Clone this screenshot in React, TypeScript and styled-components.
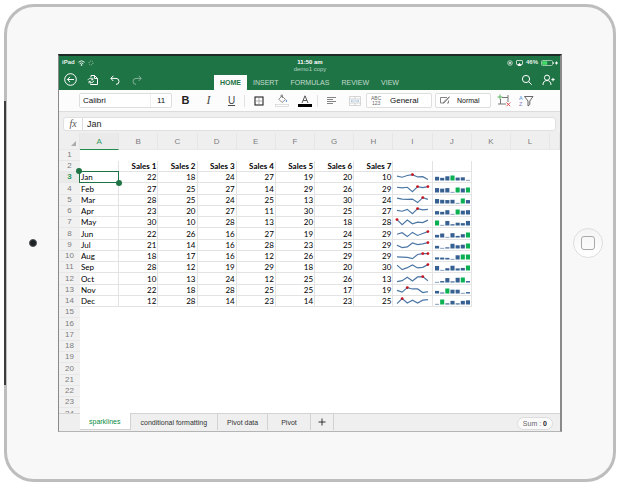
import React from "react";
import styled, { createGlobalStyle, css } from "styled-components";

const GREEN = "#1f7446";

const Global = createGlobalStyle`
  * { box-sizing: border-box; }
  body { margin: 0; background: #fff; font-family: "Liberation Sans", Arial, sans-serif; }
  button, input, select { font: inherit; color: inherit; margin: 0; padding: 0; border: 0; background: none; appearance: none; outline: none; }
  svg { display: block; flex: none; }
`;

const Tablet = styled.main`
  position: relative;
  display: grid;
  grid-template-columns: 51px minmax(0, 1fr) 51px;
  align-items: center;
  justify-items: center;
  margin: 4px;
  padding: 47px 0;
  border: 3px solid #bdbdbd;
  border-radius: 30px;
  background: #f8f8f8;
`;
const EdgeShadow = styled.div`
  position: absolute;
  left: -3px;
  top: 20%;
  bottom: 20%;
  width: 2px;
  background: #3c3c3c;
`;
const Camera = styled.div`
  width: 8px;
  height: 8px;
  border-radius: 50%;
  border: 1px solid #555;
  background: #1c2226;
`;
const HomeButton = styled.button`
  display: grid;
  place-items: center;
  width: 30px;
  height: 30px;
  border: 1px solid #dedede;
  border-radius: 50%;
  background: linear-gradient(#f4f4f4, #fff);
  &::after {
    content: "";
    width: 12px;
    height: 12px;
    border: 1px solid #a9a9a9;
    border-radius: 3px;
  }
`;
const Screen = styled.div`
  width: 100%;
  border: solid #8a8a8a;
  border-width: 2px 2px 1px 1px;
  border-top-color: #1d2a25;
  border-bottom-color: #b5b5b5;
  background: #fff;
`;

const Header = styled.header`
  background: ${GREEN};
  color: #fff;
`;
const StatusBar = styled.div`
  display: grid;
  grid-template-columns: 1fr auto 1fr;
  height: 17px;
  padding: 3px 2px 0 3px;
  font-size: 7px;
  line-height: 7px;
  color: #e6f0ea;
`;
const StatusGroup = styled.div<{ $end?: boolean }>`
  display: flex;
  align-items: center;
  justify-content: ${(p) => (p.$end ? "flex-end" : "flex-start")};
  gap: 3px;
  height: 7px;
  font-size: 6px;
  font-weight: 700;
`;
const Title = styled.div`
  text-align: center;
  font-size: 6px;
  strong { display: block; color: #fff; }
  span { color: #b5d2c1; }
`;
const Ribbon = styled.div`
  display: flex;
  justify-content: space-between;
  height: 17px;
  padding: 0 5px;
`;
const IconRow = styled.div<{ $gap: number }>`
  display: flex;
  align-items: center;
  gap: ${(p) => p.$gap}px;
  height: 13px;
`;
const HeaderSide = styled.div`
  display: flex;
`;
const IconButton = styled.button<{ $dim?: boolean }>`
  display: grid;
  place-items: center;
  opacity: ${(p) => (p.$dim ? 0.45 : 1)};
`;
const Tabs = styled.nav`
  display: flex;
  align-items: flex-end;
  margin-left: 71px;
`;
const RibbonTab = styled.button<{ $active?: boolean }>`
  height: 15px;
  padding: 0 6px;
  font-size: 7px;
  line-height: 15px;
  color: #c3dccd;
  ${(p) => p.$active && css`
    background: #fcfcfc;
    color: ${GREEN};
    font-weight: 700;
  `}
`;

const Toolbar = styled.div`
  display: flex;
  align-items: center;
  height: 22px;
  padding-left: 20px;
  border-bottom: 1px solid #dcdcdc;
  background: #fcfcfc;
  color: #333;
  font-size: 8px;
`;
const Box = styled.div<{ $width: number; $gap: number }>`
  display: flex;
  align-items: center;
  flex: none;
  width: ${(p) => p.$width}px;
  height: 15px;
  margin-right: ${(p) => p.$gap}px;
  border: 1px solid #dedede;
  border-radius: 2px;
  background: #fff;
  svg { margin-left: 4px; }
`;
const Picker = styled.select`
  flex: 1;
  min-width: 0;
  height: 13px;
  padding-left: 3px;
  font-size: 8px;
  line-height: 13px;
  color: #111;
`;
const NumberPicker = styled(Picker)`
  padding-left: 8px;
`;
const StylePicker = styled(Picker)`
  padding-left: 7px;
  font-size: 7px;
`;
const SizePicker = styled(Picker)`
  flex: none;
  width: 21px;
  padding-left: 6px;
  border-left: 1px solid #eee;
`;
const Tool = styled.button<{ $look?: "bold" | "italic" | "underline" }>`
  display: grid;
  place-items: center;
  flex: none;
  width: 23px;
  height: 15px;
  color: #4a4a4a;
  font-size: 10px;
  line-height: 15px;
  ${(p) => p.$look === "bold" && css`font-weight: 700; color: #222; font-size: 11px;`}
  ${(p) => p.$look === "italic" && css`font-family: "Liberation Serif", serif; font-style: italic; font-size: 12px;`}
  ${(p) => p.$look === "underline" && css`text-decoration: underline; font-size: 10px;`}
`;
const Rule = styled.span`
  flex: none;
  width: 1px;
  height: 12px;
  margin: 0 2px 0 1px;
  background: #e2e2e2;
`;

const FormulaArea = styled.div`
  padding: 5px 4px 2px;
  background: #efefef;
`;
const FormulaBar = styled.label`
  display: flex;
  align-items: center;
  height: 14px;
  border: 1px solid #e0e0e0;
  border-radius: 3px;
  background: #fff;
  span {
    width: 19px;
    text-align: center;
    font: italic 10px/12px "Liberation Serif", serif;
    color: #555;
    border-right: 1px solid #ddd;
  }
  input { flex: 1; min-width: 0; height: 12px; padding-left: 4px; font-size: 9px; color: #222; }
`;

const SheetView = styled.div`
  height: 280px;
  overflow: hidden;
`;
const Sheet = styled.table`
  width: 100%;
  table-layout: fixed;
  border-collapse: separate;
  border-spacing: 0;
  font: 8px/10px Lato, sans-serif;
  color: #000;
  td, th { padding: 0; }
`;
const GutterCol = styled.col`width: 21px;`;
const DataCol = styled.col`width: 7.82%;`;
const ColumnHead = styled.th<{ $active?: boolean }>`
  height: 17px;
  font: 8px/15px "Liberation Sans", Arial, sans-serif;
  color: ${(p) => (p.$active ? "#2c9a5c" : "#7d7d7d")};
  background: ${(p) => (p.$active ? "#eaeaea" : "#efefef")};
  border-right: 1px solid #e6e6e6;
  border-bottom: ${(p) => (p.$active ? "1px solid #1f8a4c" : "1px solid #e9e9e9")};
  svg { margin: 4px 0 0 12px; }
`;
const Row = styled.tr`
  height: 11px;
  &:nth-child(4n) { height: 12px; }
`;
const RowHead = styled.th<{ $active?: boolean }>`
  font: 8px/10px "Liberation Sans", Arial, sans-serif;
  font-weight: ${(p) => (p.$active ? 700 : 400)};
  color: ${(p) => (p.$active ? "#2c9a5c" : "#7d7d7d")};
  background: ${(p) => (p.$active ? "#eaeaea" : "#f1f1f1")};
  border-bottom: 1px solid #e8e8e8;
`;
const Cell = styled.td<{ $lined?: boolean; $num?: boolean; $bold?: boolean }>`
  position: relative;
  white-space: nowrap;
  text-align: ${(p) => (p.$num ? "right" : "left")};
  font-weight: ${(p) => (p.$bold ? 700 : 400)};
  ${(p) => p.$lined && css`
    border-right: 1px solid #e3e3e3;
    border-bottom: 1px solid #e3e3e3;
  `}
  && { padding: 0 1px; }
  svg { margin: 0 1px; }
`;
const Selection = styled.div`
  position: absolute;
  inset: -1px;
  z-index: 1;
  border: 1px solid ${GREEN};
  &::before, &::after {
    content: "";
    position: absolute;
    width: 6px;
    height: 6px;
    border-radius: 50%;
    background: ${GREEN};
  }
  &::before { left: -4px; top: -4px; }
  &::after { right: -4px; bottom: -4px; }
`;

const Footer = styled.footer`
  display: flex;
  align-items: flex-start;
  height: 18px;
  padding-left: 21px;
  background: #efefef;
  border-top: 1px solid #d4d4d4;
`;
const SheetTab = styled.button<{ $active?: boolean; $pad?: number }>`
  height: 16px;
  padding: 0 ${(p) => p.$pad ?? 9}px;
  border-right: 1px solid #d2d2d2;
  font-size: 7px;
  line-height: 15px;
  white-space: nowrap;
  color: #333;
  ${(p) => p.$active && css`
    margin-top: -1px;
    height: 17px;
    background: #fff;
    color: #078a41;
    border-bottom: 1px solid #d2d2d2;
  `}
`;
const Sum = styled.output`
  margin: 3px 7px 0 auto;
  padding: 0 5px;
  border: 1px solid #dcdcdc;
  border-radius: 7px;
  background: #fafafa;
  font-size: 7px;
  line-height: 11px;
  color: #666;
  b { color: #222; }
`;

const data: [string, number[]][] = [
  ["Jan", [22, 18, 24, 27, 19, 20, 10]],
  ["Feb", [27, 25, 27, 14, 29, 26, 29]],
  ["Mar", [28, 25, 24, 25, 13, 30, 24]],
  ["Apr", [23, 20, 27, 11, 30, 25, 27]],
  ["May", [30, 10, 28, 13, 20, 18, 28]],
  ["Jun", [22, 26, 16, 27, 19, 24, 29]],
  ["Jul", [21, 14, 16, 28, 23, 25, 29]],
  ["Aug", [18, 17, 16, 12, 26, 29, 29]],
  ["Sep", [28, 12, 19, 29, 18, 20, 30]],
  ["Oct", [10, 13, 24, 12, 25, 26, 13]],
  ["Nov", [22, 18, 28, 25, 25, 17, 19]],
  ["Dec", [12, 28, 14, 23, 14, 23, 25]],
];
const columns = "ABCDEFGHIJKL".split("");

function scale(values: number[]) {
  const min = Math.min(...values);
  const max = Math.max(...values);
  return values.map((v) => (v - min) / (max - min));
}

function LineSpark({ values }: { values: number[] }) {
  const pts = scale(values).map((s, i) => ({ x: 2 + i * 5.15, y: 7.6 - s * 5, top: s === 1 }));
  return (
    <svg width="35" height="10" viewBox="0 0 35 10" aria-label="Trend line">
      <polyline points={pts.map((p) => `${p.x},${p.y}`).join(" ")} fill="none" stroke="#4c77a5" strokeWidth="1.2" />
      {pts.filter((p) => p.top).map((p) => <circle key={p.x} cx={p.x} cy={p.y} r="1.4" fill="#c8141e" />)}
    </svg>
  );
}

function BarSpark({ values }: { values: number[] }) {
  return (
    <svg width="36" height="10" viewBox="0 0 36 10" aria-label="Trend columns">
      {scale(values).map((s, i) => {
        const h = 0.6 + s * 4.4;
        return <rect key={i} x={i * 5.15} y={8.5 - h} width="4.1" height={h} fill={s === 1 ? "#0bb052" : "#376092"} />;
      })}
    </svg>
  );
}

const line = { fill: "none", stroke: "currentColor", strokeWidth: 1 } as const;

function SheetRow({ n }: { n: number }) {
  const entry = data[n - 3];
  let cells: React.ReactNode;
  if (n === 2) {
    cells = columns.slice(0, 10).map((c, i) => (
      <Cell key={c} $lined $num $bold>{i > 0 && i < 8 ? `Sales ${i}` : null}</Cell>
    ));
  } else if (entry) {
    const [month, values] = entry;
    cells = (
      <>
        <Cell $lined>{month}{n === 3 && <Selection />}</Cell>
        {values.map((v, i) => <Cell key={i} $lined $num>{v}</Cell>)}
        <Cell $lined><LineSpark values={values} /></Cell>
        <Cell $lined><BarSpark values={values} /></Cell>
      </>
    );
  } else {
    cells = <Cell colSpan={10} />;
  }
  return (
    <Row>
      <RowHead scope="row" $active={n === 3}>{n}</RowHead>
      {cells}
      <Cell colSpan={3} />
    </Row>
  );
}

export default function App() {
  return (
    <>
      <Global />
      <Tablet>
        <EdgeShadow />
        <Camera />
        <Screen>
          <Header>
            <StatusBar>
              <StatusGroup>
                iPad
                <svg width="7" height="6" viewBox="0 0 7 6" fill="none" stroke="#e6f0ea" strokeWidth="1">
                  <path d="M.4 2.2Q3.5-.7 6.6 2.2M1.7 3.7Q3.5 2 5.3 3.7" />
                  <circle cx="3.5" cy="5" r=".5" fill="#e6f0ea" />
                </svg>
                <svg width="6" height="6" viewBox="0 0 6 6" fill="none" stroke="#9cc4ac" strokeDasharray="1 .9" strokeWidth="1">
                  <circle cx="3" cy="3" r="2" />
                </svg>
              </StatusGroup>
              <Title><strong>11:50 am</strong><span>demo1 copy</span></Title>
              <StatusGroup $end>
                <svg width="6" height="6" viewBox="0 0 6 6" fill="none" stroke="#e6f0ea" strokeWidth=".7">
                  <circle cx="3" cy="3" r="2.3" /><path d="M1.8 3h2.4M3 1.8v2.4" strokeWidth="1" />
                </svg>
                <svg width="7" height="6" viewBox="0 0 7 6">
                  <rect x=".5" y=".5" width="6" height="4" rx=".5" fill="none" stroke="#e6f0ea" strokeWidth=".8" />
                  <path d="M1.5 6 3.5 2.8 5.5 6Z" fill="#fff" />
                </svg>
                46%
                <svg width="17" height="6" viewBox="0 0 17 6">
                  <rect x=".5" y=".5" width="11" height="5" rx="1" fill="none" stroke="#b9d7c5" strokeWidth=".8" />
                  <rect x="1.2" y="1.2" width="5" height="3.6" fill="#42dc66" />
                  <path d="M12.5 2v2" stroke="#b9d7c5" />
                  <path d="M14 3h3M15.5 1.5v3" stroke="#fff" />
                </svg>
              </StatusGroup>
            </StatusBar>
            <Ribbon>
              <HeaderSide>
                <IconRow $gap={10}>
                  <IconButton aria-label="Back">
                    <svg width="13" height="13" viewBox="0 0 13 13" {...line}>
                      <circle cx="6.5" cy="6.5" r="5.8" /><path d="M10 6.5H3.5M6 3.9 3.4 6.5 6 9.1" />
                    </svg>
                  </IconButton>
                  <IconButton aria-label="File">
                    <svg width="12" height="12" viewBox="0 0 12 12" {...line}>
                      <path d="M4 3.5V1.500H7.500L10.500 4.500V10.500H3.500V9.500M7.500 1.500V4.500H10.500" />
                      <path d="M1 6.200C1.500 4 4.500 3.800 5.600 5.600M5.800 3.800V5.800H4M6.800 6.800C6.300 9 3.300 9.200 2.200 7.600M2 9.300V7.400H3.800" strokeWidth=".9" />
                    </svg>
                  </IconButton>
                  <IconButton aria-label="Undo">
                    <svg width="12" height="12" viewBox="0 0 12 12" {...line}>
                      <path d="M4.3 1.8 1.8 4.4 4.3 7M2 4.4h5a3 3 0 0 1 0 6" />
                    </svg>
                  </IconButton>
                  <IconButton aria-label="Redo" $dim>
                    <svg width="12" height="12" viewBox="0 0 12 12" {...line}>
                      <path d="M7.7 1.8l2.5 2.6L7.7 7M10 4.4H5a3 3 0 0 0 0 6" />
                    </svg>
                  </IconButton>
                </IconRow>
                <Tabs aria-label="Ribbon">
                  <RibbonTab $active>HOME</RibbonTab>
                  <RibbonTab>INSERT</RibbonTab>
                  <RibbonTab>FORMULAS</RibbonTab>
                  <RibbonTab>REVIEW</RibbonTab>
                  <RibbonTab>VIEW</RibbonTab>
                </Tabs>
              </HeaderSide>
              <IconRow $gap={9}>
                <IconButton aria-label="Search">
                  <svg width="12" height="12" viewBox="0 0 12 12" {...line}>
                    <circle cx="5" cy="5" r="3.6" /><path d="m7.7 7.7 3 3" />
                  </svg>
                </IconButton>
                <IconButton aria-label="Share">
                  <svg width="13" height="12" viewBox="0 0 13 12" {...line}>
                    <circle cx="5" cy="3.7" r="2.6" /><path d="M1 11c0-3 1.6-4.5 4-4.5S9 8 9 11M9.3 5.6h3.4M11 3.9v3.4" />
                  </svg>
                </IconButton>
              </IconRow>
            </Ribbon>
          </Header>

          <Toolbar>
            <Box $width={93} $gap={2}>
              <Picker aria-label="Font"><option>Calibri</option></Picker>
              <SizePicker aria-label="Font size"><option>11</option></SizePicker>
            </Box>
            <Tool $look="bold">B</Tool>
            <Tool $look="italic">I</Tool>
            <Tool $look="underline">U</Tool>
            <Rule />
            <Tool aria-label="Borders">
              <svg width="10" height="10" viewBox="0 0 10 10">
                <rect x="1" y="1" width="8" height="8" fill="none" stroke="#222" strokeWidth="1.1" />
                <path d="M5 2v6M2 5h6" stroke="#999" strokeWidth=".7" />
              </svg>
            </Tool>
            <Tool aria-label="Fill colour">
              <svg width="14" height="13" viewBox="0 0 14 13" fill="none">
                <path d="m7 2 3.5 3.5L7 8.5 3.8 5.2ZM6 3.3V1h1.5v3" stroke="#777" strokeWidth=".8" />
                <path d="M11.3 5.5c1 1.3 1 2.5.2 2.5s-1-1-.2-2.5Z" fill="#4a90d9" />
                <rect x=".5" y="10.5" width="13" height="2" stroke="#ccc" strokeWidth=".6" />
              </svg>
            </Tool>
            <Tool aria-label="Font colour">
              <svg width="14" height="13" viewBox="0 0 14 13">
                <path d="M4 9 7 1.8 10 9M5.1 6.5h3.8" fill="none" stroke="#444" strokeWidth=".9" />
                <rect y="10" width="14" height="3" fill="#000" />
              </svg>
            </Tool>
            <Rule />
            <Tool aria-label="Alignment">
              <svg width="10" height="9" viewBox="0 0 10 9" stroke="#777" strokeWidth=".9">
                <path d="M0 1.500h9M0 3.500h6M0 5.500h9M0 7.500h6" />
              </svg>
            </Tool>
            <Tool aria-label="Merge cells">
              <svg width="12" height="10" viewBox="0 0 12 10" fill="none" stroke="#ccc" strokeWidth=".8">
                <path d="M.5.5h11v9H.5ZM.5 3h11M.5 7h11M6 .5V3M6 7v2.5" />
                <path d="M2 5h8M3.3 4 2 5l1.3 1M8.700 4 10 5 8.700 6" stroke="#9fc0df" />
              </svg>
            </Tool>
            <Box $width={66} $gap={3}>
              <svg width="11" height="11" viewBox="0 0 11 11" fontFamily="Liberation Sans" fontSize="5" fill="#666">
                <text x="0" y="5">ABC</text><text x="1" y="10">123</text>
              </svg>
              <NumberPicker aria-label="Number format"><option>General</option></NumberPicker>
            </Box>
            <Box $width={56} $gap={1}>
              <svg width="10" height="9" viewBox="0 0 10 9" fill="none" stroke="#666" strokeWidth=".8">
                <path d="M7 1.500H.5v5.500H4M7 7h1.500V4.500M9.500.8 5 6l-1.300 1 .5-1.700Z" />
              </svg>
              <StylePicker aria-label="Cell style"><option>Normal</option></StylePicker>
            </Box>
            <Tool aria-label="Insert and delete cells">
              <svg width="14" height="13" viewBox="0 0 14 13" fill="none" stroke="#666" strokeWidth=".9">
                <path d="M3.500 5v5H9M5 3.500h6V8M1 10h2.500M11 1v2.500" />
                <path d="M.5 3h5M3 .5v5" stroke="#4caf50" />
                <path d="m9.500 8.500 3.700 3.700m0-3.700-3.700 3.700" stroke="#e0403f" />
              </svg>
            </Tool>
            <Tool aria-label="Sort and filter">
              <svg width="15" height="12" viewBox="0 0 15 12" fontFamily="Liberation Sans" fontSize="5.500">
                <text x="0" y="5" fill="#4a90d9">A</text><text x="0" y="11" fill="#8a7fc0">Z</text>
                <path d="M5.500 1.500h8.500L10.800 6v3.500L9 11V6Z" fill="none" stroke="#555" strokeWidth=".9" />
              </svg>
            </Tool>
          </Toolbar>

          <FormulaArea>
            <FormulaBar><span>fx</span><input aria-label="Formula" defaultValue="Jan" /></FormulaBar>
          </FormulaArea>

          <SheetView>
            <Sheet>
              <colgroup>
                <GutterCol />
                {columns.map((c) => <DataCol key={c} />)}
                <col />
              </colgroup>
              <thead>
                <tr>
                  <ColumnHead aria-label="Select all">
                    <svg width="5" height="5" viewBox="0 0 5 5"><path d="M5 0v5H0Z" fill="#aaa" /></svg>
                  </ColumnHead>
                  {columns.map((c) => <ColumnHead key={c} scope="col" $active={c === "A"}>{c}</ColumnHead>)}
                  <ColumnHead />
                </tr>
              </thead>
              <tbody>
                {Array.from({ length: 24 }, (_, i) => <SheetRow key={i} n={i + 1} />)}
              </tbody>
            </Sheet>
          </SheetView>

          <Footer>
            <SheetTab $active>sparklines</SheetTab>
            <SheetTab $pad={10}>conditional formatting</SheetTab>
            <SheetTab>Pivot data</SheetTab>
            <SheetTab $pad={13}>Pivot</SheetTab>
            <SheetTab $pad={7} aria-label="Add sheet">
              <svg width="8" height="8" viewBox="0 0 8 8" {...line}><path d="M4 .5v7M.5 4h7" /></svg>
            </SheetTab>
            <Sum>Sum : <b>0</b></Sum>
          </Footer>
        </Screen>
        <HomeButton aria-label="Home" />
      </Tablet>
    </>
  );
}
